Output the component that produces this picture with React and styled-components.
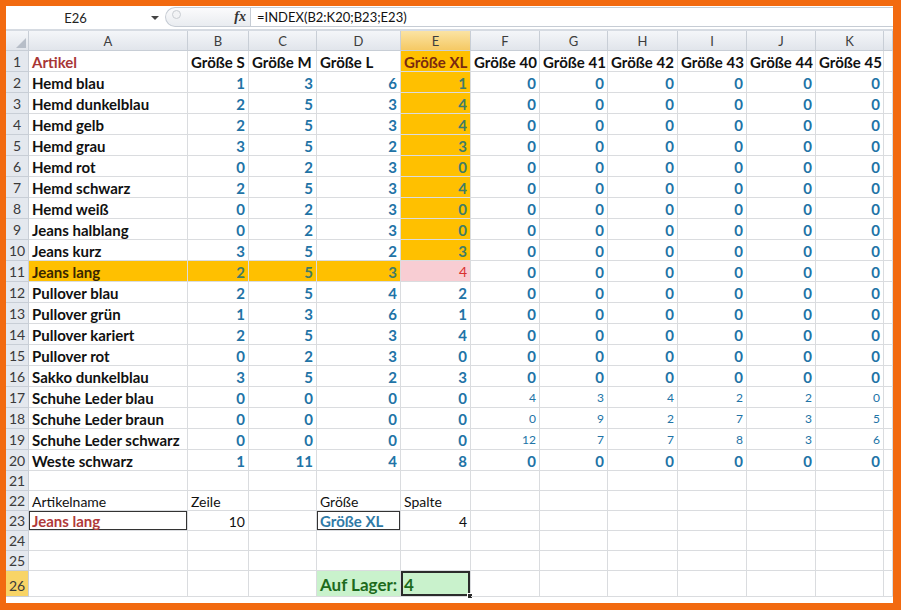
import React from "react";
import styled, { createGlobalStyle } from "styled-components";

const GlobalStyle = createGlobalStyle`
  html, body { margin: 0; padding: 0; background: #f26a10; }
  body { font-family: Lato, "Liberation Sans", sans-serif; }
  * { box-sizing: border-box; }
`;

const COLS = "23px 159px 61px 68px 84px 70px 69px 68px 70px 69px 69px 68px 9px";
const LETTERS = ["A", "B", "C", "D", "E", "F", "G", "H", "I", "J", "K"];

const Frame = styled.div`
  width: 901px;
  height: 610px;
  padding: 6px 8px 7px 6px;
  background: #f26a10;
`;

const Window = styled.div`
  width: 100%;
  height: 100%;
  background: #fff;
  display: flex;
  flex-direction: column;
  overflow: hidden;
`;

const FormulaBar = styled.div`
  height: 25px;
  display: flex;
  align-items: stretch;
  background: #fff;
  border-bottom: 2px solid #d6dbe2;
`;

const NameBox = styled.div`
  width: 159px;
  position: relative;
  display: flex;
  align-items: center;
  justify-content: center;
  font-size: 13px;
  color: #222;
  padding-right: 20px;
`;

const DropArrow = styled.span`
  position: absolute;
  right: 6px;
  top: 10px;
  width: 0;
  height: 0;
  border-left: 4px solid transparent;
  border-right: 4px solid transparent;
  border-top: 4px solid #444;
`;

const Knob = styled.div`
  width: 85px;
  margin: 1px 0 2px;
  border: 1px solid #c6ccd4;
  border-right: none;
  border-radius: 11px 0 0 11px;
  background: linear-gradient(#fbfbfc, #e9ecf0);
  display: flex;
  align-items: center;
  justify-content: space-between;
  padding: 0 4px 0 6px;
`;

const Dot = styled.span`
  width: 9px;
  height: 9px;
  border-radius: 50%;
  border: 1px solid #c9cdd2;
  background: #f2f3f5;
  margin-top: -6px;
`;

const Fx = styled.span`
  font-family: "Liberation Serif", serif;
  font-style: italic;
  font-weight: bold;
  font-size: 14px;
  color: #333;
`;

const FormulaInput = styled.div`
  flex: 1;
  margin: 1px 0 2px;
  border: 1px solid #c6ccd4;
  border-right: none;
  display: flex;
  align-items: center;
  padding-left: 6px;
  font-size: 13px;
  color: #111;
`;

const Row = styled.div`
  display: grid;
  grid-template-columns: ${COLS};
  height: ${(p) => p.$h}px;
  flex: none;
`;

const HeadCell = styled.div`
  display: flex;
  align-items: center;
  justify-content: center;
  font-size: 13px;
  color: #3d3d3d;
  background: ${(p) =>
    p.$active
      ? "linear-gradient(#fbe3a3, #f5c964)"
      : "linear-gradient(#f4f6f9, #e1e5eb)"};
  border-right: 1px solid #c8ced6;
  border-bottom: 1px solid #c8ced6;
`;

const RowHead = styled(HeadCell)`
  background: ${(p) => (p.$active ? "#f8d466" : "#e4e8ee")};
  color: #3a3a3a;
  font-size: 14px;
  padding-top: ${(p) => (p.$tall ? 4 : 0)}px;
`;

const Corner = styled(HeadCell)`
  align-items: flex-end;
  justify-content: flex-end;
  padding: 0 2px 2px 0;
`;

const Cell = styled.div`
  position: relative;
  display: flex;
  align-items: center;
  justify-content: ${(p) => (p.$right ? "flex-end" : "flex-start")};
  padding: 1px 3px 0;
  white-space: nowrap;
  overflow: visible;
  font-size: ${(p) => p.$size || (p.$bold ? 15 : 14)}px;
  font-weight: ${(p) => (p.$bold ? 700 : 400)};
  color: ${(p) => p.$color || "#111"};
  background: ${(p) => p.$bg || "transparent"};
  border-right: 1px solid #dadcdf;
  border-bottom: 1px solid #dadcdf;
  box-shadow: ${(p) => (p.$boxed ? "inset 0 0 0 1px #333" : "none")};
`;

const Selected = styled(Cell)`
  box-shadow: inset 0 0 0 2px #2b2b2b;
`;

const Handle = styled.span`
  position: absolute;
  right: -3px;
  bottom: -3px;
  width: 6px;
  height: 6px;
  background: #2b2b2b;
  border: 1px solid #fff;
`;

const BLUE = "#2173a6";
const ORANGE = "#ffc000";
const ON_ORANGE = "#3f7c66";

const items = [
  ["Hemd blau", 1, 3, 6, 1],
  ["Hemd dunkelblau", 2, 5, 3, 4],
  ["Hemd gelb", 2, 5, 3, 4],
  ["Hemd grau", 3, 5, 2, 3],
  ["Hemd rot", 0, 2, 3, 0],
  ["Hemd schwarz", 2, 5, 3, 4],
  ["Hemd weiß", 0, 2, 3, 0],
  ["Jeans halblang", 0, 2, 3, 0],
  ["Jeans kurz", 3, 5, 2, 3],
  ["Jeans lang", 2, 5, 3, 4],
  ["Pullover blau", 2, 5, 4, 2],
  ["Pullover grün", 1, 3, 6, 1],
  ["Pullover kariert", 2, 5, 3, 4],
  ["Pullover rot", 0, 2, 3, 0],
  ["Sakko dunkelblau", 3, 5, 2, 3],
  ["Schuhe Leder blau", 0, 0, 0, 0, [4, 3, 4, 2, 2, 0]],
  ["Schuhe Leder braun", 0, 0, 0, 0, [0, 9, 2, 7, 3, 5]],
  ["Schuhe Leder schwarz", 0, 0, 0, 0, [12, 7, 7, 8, 3, 6]],
  ["Weste schwarz", 1, 11, 4, 8],
];

const headers = ["Größe S", "Größe M", "Größe L", "Größe XL", "Größe 40", "Größe 41", "Größe 42", "Größe 43", "Größe 44", "Größe 45"];

function DataRow({ n, item }) {
  const [name, b, c, d, e, shoes] = item;
  const hit = n === 11;
  const inE = n <= 10;
  const rest = shoes || [0, 0, 0, 0, 0, 0];
  return (
    <Row $h={21}>
      <RowHead>{n}</RowHead>
      <Cell $bold $bg={hit ? ORANGE : null} $color={hit ? "#3a2600" : "#111"}>{name}</Cell>
      {[b, c, d].map((v, i) => (
        <Cell key={i} $right $bold $bg={hit ? ORANGE : null} $color={hit ? ON_ORANGE : BLUE}>{v}</Cell>
      ))}
      {hit ? (
        <Cell $right $size={14} $bg="#f8cdd3" $color="#d83030">{e}</Cell>
      ) : (
        <Cell $right $bold $bg={inE ? ORANGE : null} $color={inE ? ON_ORANGE : BLUE}>{e}</Cell>
      )}
      {rest.map((v, i) => (
        <Cell key={"r" + i} $right $bold={!shoes} $size={shoes ? 12 : null} $color={BLUE}>{v}</Cell>
      ))}
      <Cell />
    </Row>
  );
}

function EmptyCells({ from = 0, to = 12 }) {
  return Array.from({ length: to - from }, (_, i) => <Cell key={"e" + (from + i)} />);
}

export default function App() {
  return (
    <Frame>
      <GlobalStyle />
      <Window>
        <FormulaBar>
          <NameBox>
            E26
            <DropArrow />
          </NameBox>
          <Knob>
            <Dot />
            <Fx>fx</Fx>
          </Knob>
          <FormulaInput>=INDEX(B2:K20;B23;E23)</FormulaInput>
        </FormulaBar>

        <Row $h={20}>
          <Corner>
            <svg width="10" height="10" viewBox="0 0 10 10">
              <polygon points="10,0 10,10 0,10" fill="#b7bec8" />
            </svg>
          </Corner>
          {LETTERS.map((l) => (
            <HeadCell key={l} $active={l === "E"}>{l}</HeadCell>
          ))}
          <HeadCell />
        </Row>

        <Row $h={21}>
          <RowHead>1</RowHead>
          <Cell $bold $color="#a83636">Artikel</Cell>
          {headers.map((h) => (
            <Cell key={h} $bold $bg={h === "Größe XL" ? ORANGE : null} $color={h === "Größe XL" ? "#7a2a10" : "#111"}>{h}</Cell>
          ))}
          <Cell />
        </Row>

        {items.map((item, i) => (
          <DataRow key={i} n={i + 2} item={item} />
        ))}

        <Row $h={20}>
          <RowHead>21</RowHead>
          <EmptyCells />
        </Row>

        <Row $h={20}>
          <RowHead>22</RowHead>
          <Cell>Artikelname</Cell>
          <Cell>Zeile</Cell>
          <Cell />
          <Cell>Größe</Cell>
          <Cell>Spalte</Cell>
          <EmptyCells from={5} />
        </Row>

        <Row $h={20}>
          <RowHead>23</RowHead>
          <Cell $bold $boxed $color="#b03a3a">Jeans lang</Cell>
          <Cell $right>10</Cell>
          <Cell />
          <Cell $bold $boxed $color="#2f7aa6">Größe XL</Cell>
          <Cell $right>4</Cell>
          <EmptyCells from={5} />
        </Row>

        <Row $h={20}>
          <RowHead>24</RowHead>
          <EmptyCells />
        </Row>

        <Row $h={20}>
          <RowHead>25</RowHead>
          <EmptyCells />
        </Row>

        <Row $h={26}>
          <RowHead $active $tall>26</RowHead>
          <Cell />
          <Cell />
          <Cell />
          <Cell $bold $size={17} $bg="#c9f2cc" $color="#1d6a1d">Auf Lager:</Cell>
          <Selected $bold $size={17} $bg="#c9f2cc" $color="#1d6a1d">
            4
            <Handle />
          </Selected>
          <EmptyCells from={5} />
        </Row>
      </Window>
    </Frame>
  );
}
